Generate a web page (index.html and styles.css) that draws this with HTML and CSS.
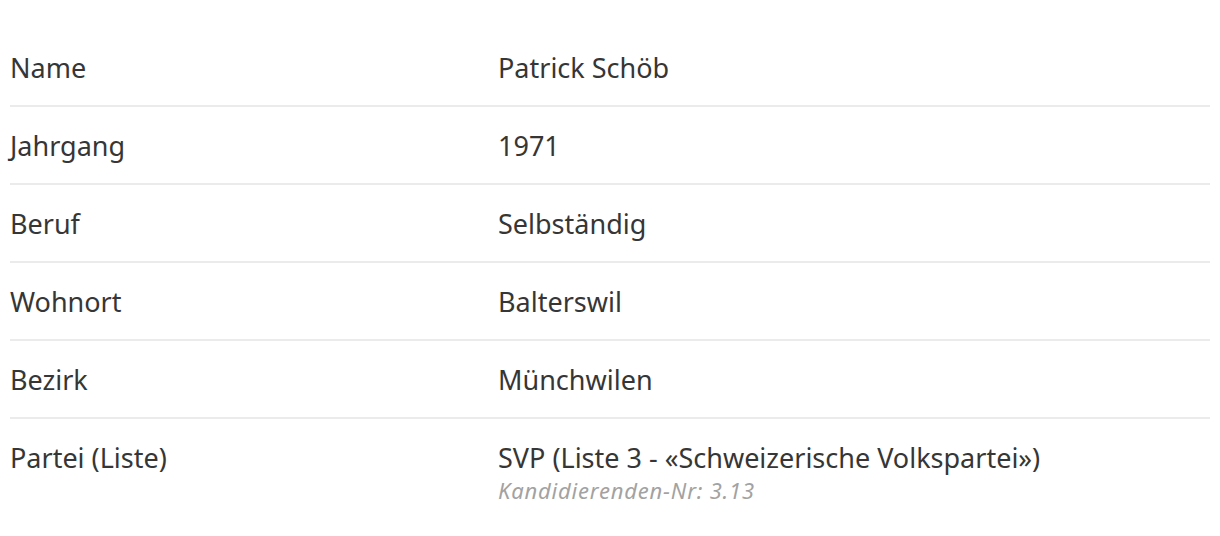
FILE: index.html
```html
<!DOCTYPE html>
<html lang="de">
<head>
<meta charset="utf-8">
<title>Kandidat</title>
<link rel="stylesheet" href="styles.css">
</head>
<body>
<dl class="details">
  <div class="row"><dt class="label">Name</dt><dd class="value">Patrick Schöb</dd></div>
  <div class="row"><dt class="label">Jahrgang</dt><dd class="value">1971</dd></div>
  <div class="row"><dt class="label">Beruf</dt><dd class="value">Selbständig</dd></div>
  <div class="row"><dt class="label">Wohnort</dt><dd class="value">Balterswil</dd></div>
  <div class="row"><dt class="label">Bezirk</dt><dd class="value">Münchwilen</dd></div>
  <div class="row last"><dt class="label">Partei (Liste)</dt><dd class="value">SVP (Liste 3 - «Schweizerische Volkspartei»)<span class="sub">Kandidierenden-Nr: 3.13</span></dd></div>
</dl>
</body>
</html>
```
FILE: styles.css
```css
html, body {
  margin: 0;
  padding: 0;
  background: #fff;
}
body {
  font-family: "Noto Sans", "Open Sans", sans-serif;
  color: #363636;
}
.details {
  margin: 29px 10px 0;
  padding: 0;
}
.row {
  display: grid;
  grid-template-columns: 488px 1fr;
  padding: 19px 0 17px;
  border-bottom: 2px solid #ebebeb;
  font-size: 27px;
  line-height: 40px;
}
.row.last {
  border-bottom: none;
}
.label, .value {
  margin: 0;
}
.sub {
  display: block;
  font-size: 22px;
  line-height: 24px;
  letter-spacing: 0.8px;
  font-style: italic;
  color: #a2a2a2;
}
```
